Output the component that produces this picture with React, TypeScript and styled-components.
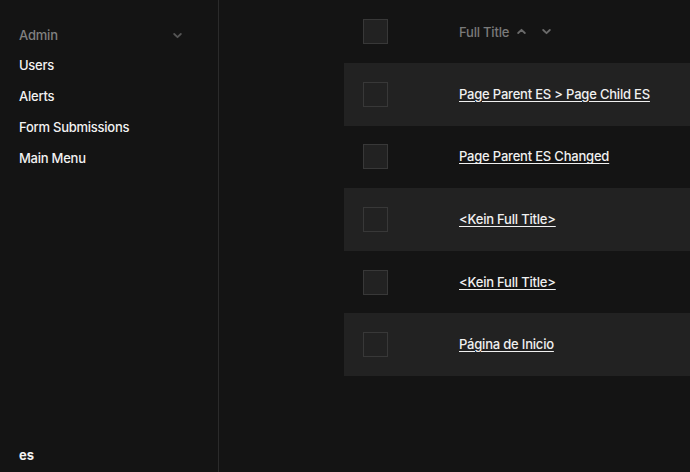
import React from "react";
import styled, { createGlobalStyle } from "styled-components";

const Global = createGlobalStyle`
  html, body { margin: 0; padding: 0; background: #141414; }
  body { font-family: Inter, "Noto Sans", sans-serif; color: #ededed; }
  * { box-sizing: border-box; }
`;

const Page = styled.div`
  display: grid;
  grid-template-columns: 219px 1fr;
  height: 472px;
  overflow: hidden;
  background: #141414;
`;

const Sidebar = styled.nav`
  display: flex;
  flex-direction: column;
  justify-content: space-between;
  border-right: 1px solid #2b2b2b;
  padding: 26px 0 9px 19px;
`;

const NavList = styled.div`
  display: flex;
  flex-direction: column;
`;

const GroupHeader = styled.div`
  display: flex;
  align-items: center;
  justify-content: space-between;
  width: 163px;
  height: 18px;
  font-size: 13px;
  font-weight: 500;
  color: #808080;
  letter-spacing: -0.2px;
  margin-bottom: 12px;
`;

const NavItem = styled.a`
  font-size: 13px;
  font-weight: 500;
  color: #f2f2f2;
  height: 31px;
  line-height: 18px;
  letter-spacing: -0.25px;
  text-decoration: none;
`;

const Locale = styled.div`
  font-size: 13px;
  font-weight: 700;
  color: #f2f2f2;
`;

const Main = styled.main`
  padding-left: 125px;
`;

const Table = styled.div`
  display: flex;
  flex-direction: column;
`;

const Row = styled.div<{ $shade?: boolean; $h: number }>`
  display: grid;
  grid-template-columns: 115px 1fr;
  align-items: center;
  height: ${(p) => p.$h}px;
  background: ${(p) => (p.$shade ? "#222222" : "#141414")};
`;

const CheckCell = styled.div`
  padding-left: 19px;
  display: flex;
  align-items: center;
`;

const Checkbox = styled.span`
  display: block;
  width: 25px;
  height: 25px;
  border: 1px solid #383838;
  background: #222222;
`;

const HeaderLabel = styled.div`
  display: flex;
  align-items: center;
  font-size: 13px;
  font-weight: 500;
  color: #7a7a7a;
  letter-spacing: -0.2px;
`;

const SortIcons = styled.span`
  display: inline-flex;
  align-items: center;
  gap: 16px;
  margin-left: 8px;
`;

const TitleCell = styled.div`
  padding-bottom: 3px;
`;

const TitleLink = styled.a`
  font-size: 13px;
  font-weight: 500;
  color: #f0f0f0;
  text-decoration: underline;
  text-underline-offset: 2px;
  letter-spacing: -0.2px;
`;

const Chevron = ({ up, color }: { up?: boolean; color: string }) => (
  <svg width="9" height="9" viewBox="0 0 9 9" fill="none">
    <path
      d={up ? "M1.2 6 L4.5 2.8 L7.8 6" : "M1.2 3 L4.5 6.2 L7.8 3"}
      stroke={color}
      strokeWidth="1.8"
      strokeLinecap="round"
      strokeLinejoin="round"
    />
  </svg>
);

const rows = [
  "Page Parent ES > Page Child ES",
  "Page Parent ES Changed",
  "<Kein Full Title>",
  "<Kein Full Title>",
  "Página de Inicio",
];

export default function App() {
  return (
    <>
      <Global />
      <Page>
        <Sidebar>
          <NavList>
            <GroupHeader>
              <span>Admin</span>
              <Chevron color="#555" />
            </GroupHeader>
            <NavItem>Users</NavItem>
            <NavItem>Alerts</NavItem>
            <NavItem>Form Submissions</NavItem>
            <NavItem>Main Menu</NavItem>
          </NavList>
          <Locale>es</Locale>
        </Sidebar>
        <Main>
          <Table>
            <Row $h={63}>
              <CheckCell>
                <Checkbox />
              </CheckCell>
              <HeaderLabel>
                Full Title
                <SortIcons>
                  <Chevron up color="#6a6a6a" />
                  <Chevron color="#6a6a6a" />
                </SortIcons>
              </HeaderLabel>
            </Row>
            {rows.map((t, i) => (
              <Row key={i} $shade={i % 2 === 0} $h={62.6}>
                <CheckCell>
                  <Checkbox />
                </CheckCell>
                <TitleCell>
                  <TitleLink>{t}</TitleLink>
                </TitleCell>
              </Row>
            ))}
          </Table>
        </Main>
      </Page>
    </>
  );
}
